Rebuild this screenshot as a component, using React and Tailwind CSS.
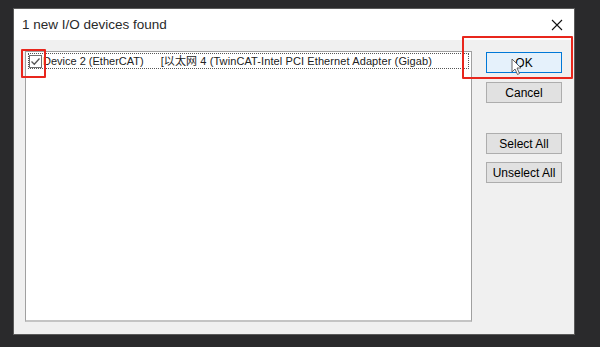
import React from "react";

const font = { fontFamily: '"Liberation Sans", "Noto Sans CJK SC", Arial, sans-serif' };

const WinButton = ({ children, focused }) => (
  <div
    className={`h-[21px] w-[76px] flex items-center justify-center text-[12px] text-black border ${
      focused ? "bg-[#e5f1fb] border-[#0078d7]" : "bg-[#e1e1e1] border-[#adadad]"
    }`}
  >
    {children}
  </div>
);

export default function App() {
  return (
    <div className="w-[600px] h-[347px] bg-[#2a2a2c] relative overflow-hidden" style={font}>
      {/* dialog */}
      <div className="absolute left-[13px] top-[8px] w-[562px] h-[327px] border border-[#5a5a5a] bg-[#f0f0f0] flex flex-col">
        {/* title bar */}
        <div className="h-[31px] bg-white flex items-center justify-between pl-[8px] pr-[10px] shrink-0">
          <span className="text-[13.5px] text-[#2a2a2a] pt-[1px]">1 new I/O devices found</span>
          <svg width="12" height="12" viewBox="0 0 12 12" className="ml-auto mr-[1px]">
            <path d="M1 1 L11 11 M11 1 L1 11" stroke="#111" strokeWidth="1.1" />
          </svg>
        </div>
        {/* body */}
        <div className="flex flex-1 pl-[11px] pt-[11px] pb-[12px]">
          <div className="w-[447px] h-full bg-white border border-[#a0a0a0] border-b-[2px] border-b-[#c4c4c4] pt-[1px] pl-[2px] pr-[2px]">
            <div className="flex items-center h-[16px] border border-dotted border-[#555]">
              <div className="w-[13px] h-[13px] border border-[#707070] bg-white flex items-center justify-center shrink-0">
                <svg width="11" height="11" viewBox="0 0 11 11">
                  <path d="M1.5 5.5 L4.3 8.3 L9.5 2.5" fill="none" stroke="#555" strokeWidth="1.3" />
                </svg>
              </div>
              <span className="text-[11px] text-[#222] whitespace-nowrap leading-none ml-[1px]">
                Device 2 (EtherCAT)
              </span>
              <span className="text-[11px] text-[#222] whitespace-nowrap leading-none ml-[17px] tracking-[0.1px]">
                [以太网 4 (TwinCAT-Intel PCI Ethernet Adapter (Gigab)
              </span>
            </div>
          </div>
          <div className="flex flex-col ml-[14px] pt-[1px]">
            <WinButton focused>OK</WinButton>
            <div className="h-[9px]" />
            <WinButton>Cancel</WinButton>
            <div className="h-[30px]" />
            <WinButton>Select All</WinButton>
            <div className="h-[8px]" />
            <WinButton>Unselect All</WinButton>
          </div>
        </div>
      </div>

      {/* annotation boxes */}
      <div className="absolute left-[21px] top-[49px] w-[25px] h-[29px] border-2 border-[#e8261c] rounded-[1px]" />
      <div className="absolute left-[462px] top-[36px] w-[111px] h-[43px] border-2 border-[#e8261c] rounded-[1px]" />

      {/* mouse cursor */}
      <svg className="absolute left-[511px] top-[58px]" width="12" height="18" viewBox="0 0 12 18">
        <path d="M1 1 L1 14 L4 11 L6.5 16.5 L8.5 15.5 L6 10 L10 10 Z" fill="#fff" stroke="#555" strokeWidth="0.9" />
      </svg>
    </div>
  );
}
